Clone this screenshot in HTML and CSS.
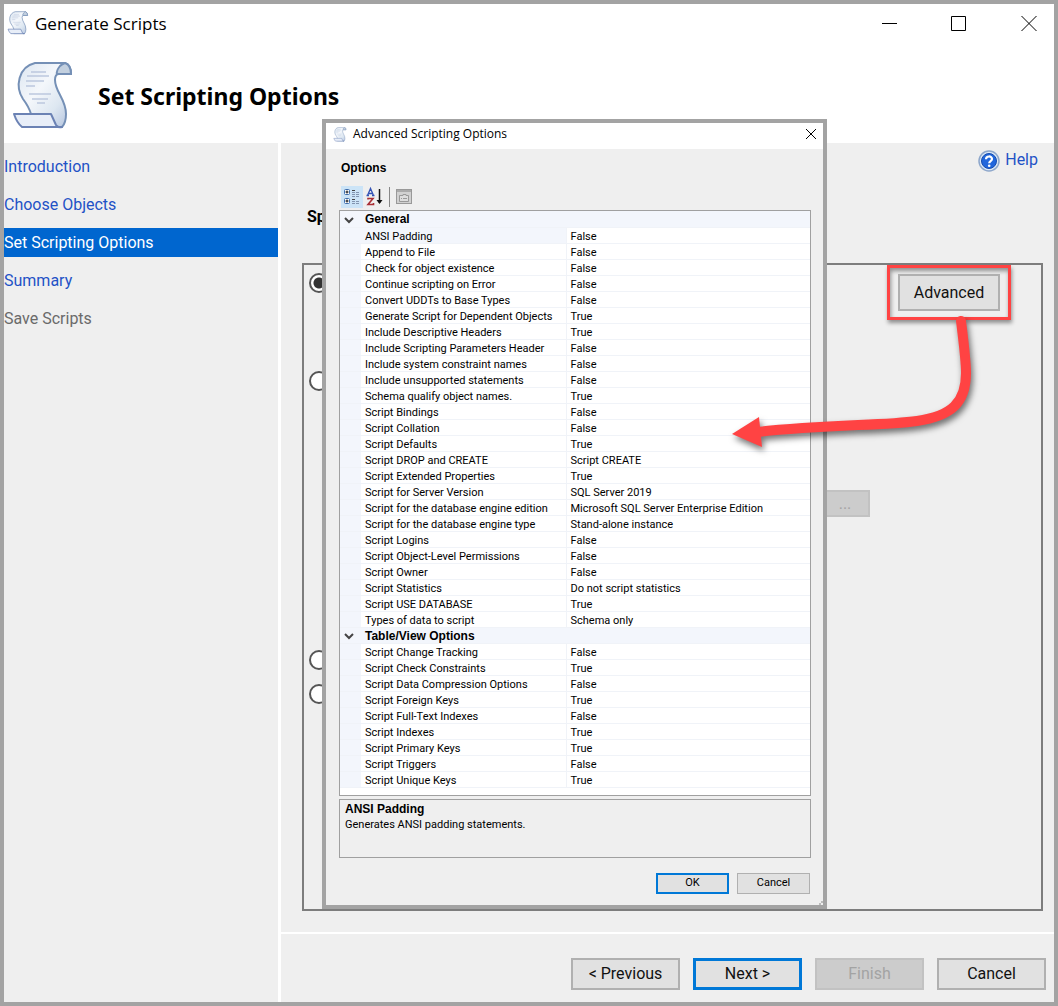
FILE: index.html
```html
<!DOCTYPE html>
<html lang="en">
<head>
<meta charset="utf-8">
<title>Generate Scripts</title>
<link rel="stylesheet" href="styles.css">
</head>
<body>
<svg class="defs" aria-hidden="true">
  <defs>
    <linearGradient id="paper" x1="0" y1="0" x2="1" y2="1">
      <stop offset="0" stop-color="#dce6f1"/><stop offset=".4" stop-color="#f4f7fb"/><stop offset=".7" stop-color="#dde7f1"/><stop offset="1" stop-color="#b0c0dc"/>
    </linearGradient>
    <symbol id="scroll" viewBox="0 0 62 70">
      <path d="M23 2 H53 Q59 4 59 13 H47 Q43 13 43 19 C43 31 54 38 54 53 Q54 62 50 66 H19 L19 53 Q17 46 11 38 C3 26 6 6 23 2Z" fill="url(#paper)" stroke="#7590b6" stroke-width="2"/>
      <path d="M53 2 Q59 4 59 13 H45 Q44 10 48 5 Q50 3 53 2Z" fill="#c3d0df" stroke="#7590b6" stroke-width="2"/>
      <path d="M2 53 H39 L44 64 Q46 67 50 66 H10 Q5 62 2 53Z" fill="#e8eef8" stroke="#6b82b4" stroke-width="2" stroke-linejoin="round"/>
      <path d="M19 11H34M15 15H37M14 20H32M14 25H23M17 33H39M20 38H36M25 42H33" stroke="#bcc8de" stroke-width="1.5"/>
    </symbol>
  </defs>
</svg>
<div class="window">
  <header class="titlebar">
    <svg class="title-icon"><use href="#scroll"/></svg>
    <span class="title">Generate Scripts</span>
    <div class="window-controls">
      <button aria-label="Minimize"><svg viewBox="0 0 16 16"><path d="M1 8.500H16"/></svg></button>
      <button aria-label="Maximize"><svg viewBox="0 0 16 16"><path d="M.5 1.500H14.500V15.500H.5Z"/></svg></button>
      <button aria-label="Close"><svg viewBox="0 0 16 16"><path d="M.5 1L15.500 16M15.500 1L.5 16"/></svg></button>
    </div>
  </header>
  <div class="banner">
    <svg class="banner-icon"><use href="#scroll"/></svg>
    <h1>Set Scripting Options</h1>
  </div>
  <div class="body">
    <nav class="steps">
      <a href="#">Introduction</a>
      <a href="#">Choose Objects</a>
      <a href="#" class="current" aria-current="step">Set Scripting Options</a>
      <a href="#">Summary</a>
      <span>Save Scripts</span>
    </nav>
    <main class="page">
      <div class="help-row">
        <a href="#" class="help">
          <svg viewBox="0 0 22 22"><circle cx="11" cy="11" r="10" fill="#dbe8f7" stroke="#8ea7cb" stroke-width="1.500"/><circle cx="11" cy="11" r="7.500" fill="#2166dc" stroke="#164cae"/><path d="M8 9.200C8 5.600 14 5.600 14 9C14 11.200 11.200 11 11.200 13.200" fill="none" stroke="#fff" stroke-width="2.200"/><circle cx="11.200" cy="15.800" r="1.300" fill="#fff"/></svg>
          Help</a>
      </div>
      <h2>Specify</h2>
      <section class="options">
        <div class="option first">
          <input type="radio" name="target" aria-label="Save to file" checked>
          <div class="callout"><button class="btn advanced">Advanced</button></div>
        </div>
        <div class="option second"><input type="radio" name="target" aria-label="Files to generate"></div>
        <div class="browse-row"><button class="btn browse" disabled aria-label="Browse">...</button></div>
        <div class="option"><input type="radio" name="target" aria-label="Save to clipboard"></div>
        <div class="option"><input type="radio" name="target" aria-label="Save to query window"></div>
      </section>
      <footer class="wizard-buttons">
        <button class="btn">&lt; Previous</button>
        <button class="btn default">Next &gt;</button>
        <button class="btn" disabled>Finish</button>
        <button class="btn">Cancel</button>
      </footer>
    </main>
  </div>

  <div class="dialog" role="dialog" aria-labelledby="dialog-title">
    <header class="dialog-titlebar">
      <svg class="dialog-icon"><use href="#scroll"/></svg>
      <span class="dialog-title" id="dialog-title">Advanced Scripting Options</span>
      <button aria-label="Close dialog"><svg viewBox="0 0 12 12"><path d="M1 1L11 11M11 1L1 11"/></svg></button>
    </header>
    <div class="dialog-body">
      <h3>Options</h3>
      <div class="toolbar">
        <button class="active" aria-label="Categorized"><svg viewBox="0 0 22 22"><g fill="#fff" stroke="#3f6fae"><rect x="3.500" y="3.500" width="5" height="5" rx="1"/><rect x="3.500" y="12.500" width="5" height="5" rx="1"/></g><path d="M4.500 6H7.500M6 4.500V7.500M4.500 15H7.500M6 13.500V16.500" stroke="#111"/><path d="M11 4.500H14M11 13.500H14" stroke="#444"/><path d="M11 6.500H14M15 6.500H18M11 8.500H14M15 8.500H18M11 10.500H14M15 10.500H18M11 15.500H14M15 15.500H18M11 17.500H14M15 17.500H18" stroke="#8295b0"/></svg></button>
        <button aria-label="Alphabetical"><svg viewBox="0 0 22 22"><path d="M3.500 9.500L6.500 2.500L9.500 9.500M4.500 7.500H8.500M2.500 9.500H5M8 9.500H10.500" fill="none" stroke="#3353b5" stroke-width="1.300"/><path d="M4 13.500V12.500H9L4 18.500H9.500V17" fill="none" stroke="#a82e34" stroke-width="1.600"/><path d="M15.500 3V17" stroke="#111" stroke-width="1.500"/><path d="M12.500 14H18.500L15.500 18Z" fill="#111"/></svg></button>
        <span class="separator"></span>
        <button aria-label="Property pages" disabled><svg viewBox="0 0 22 22"><rect x="3.500" y="3.500" width="15" height="14" fill="#d1d1d1" stroke="#999"/><path d="M4 5H18" stroke="#aaa" stroke-width="2"/><path d="M6.500 9.500H10V8.500H13V9.500H15.500V15.500H6.500Z" fill="#ddd" stroke="#999"/><path d="M8 12.500H9M10 12.500H14" stroke="#999"/></svg></button>
      </div>
      <div class="grid">
        <table>
          <colgroup><col class="col-margin"><col class="col-name"><col></colgroup>
          <tbody>
            <tr class="group"><td><svg viewBox="0 0 10 10"><path d="M1 3L5 7L9 3"/></svg></td><th colspan="2" scope="rowgroup">General</th></tr>
            <tr class="selected"><td></td><th scope="row">ANSI Padding</th><td>False</td></tr>
            <tr><td></td><th scope="row">Append to File</th><td>False</td></tr>
            <tr><td></td><th scope="row">Check for object existence</th><td>False</td></tr>
            <tr><td></td><th scope="row">Continue scripting on Error</th><td>False</td></tr>
            <tr><td></td><th scope="row">Convert UDDTs to Base Types</th><td>False</td></tr>
            <tr><td></td><th scope="row">Generate Script for Dependent Objects</th><td>True</td></tr>
            <tr><td></td><th scope="row">Include Descriptive Headers</th><td>True</td></tr>
            <tr><td></td><th scope="row">Include Scripting Parameters Header</th><td>False</td></tr>
            <tr><td></td><th scope="row">Include system constraint names</th><td>False</td></tr>
            <tr><td></td><th scope="row">Include unsupported statements</th><td>False</td></tr>
            <tr><td></td><th scope="row">Schema qualify object names.</th><td>True</td></tr>
            <tr><td></td><th scope="row">Script Bindings</th><td>False</td></tr>
            <tr><td></td><th scope="row">Script Collation</th><td>False</td></tr>
            <tr><td></td><th scope="row">Script Defaults</th><td>True</td></tr>
            <tr><td></td><th scope="row">Script DROP and CREATE</th><td>Script CREATE</td></tr>
            <tr><td></td><th scope="row">Script Extended Properties</th><td>True</td></tr>
            <tr><td></td><th scope="row">Script for Server Version</th><td>SQL Server 2019</td></tr>
            <tr><td></td><th scope="row">Script for the database engine edition</th><td>Microsoft SQL Server Enterprise Edition</td></tr>
            <tr><td></td><th scope="row">Script for the database engine type</th><td>Stand-alone instance</td></tr>
            <tr><td></td><th scope="row">Script Logins</th><td>False</td></tr>
            <tr><td></td><th scope="row">Script Object-Level Permissions</th><td>False</td></tr>
            <tr><td></td><th scope="row">Script Owner</th><td>False</td></tr>
            <tr><td></td><th scope="row">Script Statistics</th><td>Do not script statistics</td></tr>
            <tr><td></td><th scope="row">Script USE DATABASE</th><td>True</td></tr>
            <tr><td></td><th scope="row">Types of data to script</th><td>Schema only</td></tr>
          </tbody>
          <tbody>
            <tr class="group"><td><svg viewBox="0 0 10 10"><path d="M1 3L5 7L9 3"/></svg></td><th colspan="2" scope="rowgroup">Table/View Options</th></tr>
            <tr><td></td><th scope="row">Script Change Tracking</th><td>False</td></tr>
            <tr><td></td><th scope="row">Script Check Constraints</th><td>True</td></tr>
            <tr><td></td><th scope="row">Script Data Compression Options</th><td>False</td></tr>
            <tr><td></td><th scope="row">Script Foreign Keys</th><td>True</td></tr>
            <tr><td></td><th scope="row">Script Full-Text Indexes</th><td>False</td></tr>
            <tr><td></td><th scope="row">Script Indexes</th><td>True</td></tr>
            <tr><td></td><th scope="row">Script Primary Keys</th><td>True</td></tr>
            <tr><td></td><th scope="row">Script Triggers</th><td>False</td></tr>
            <tr><td></td><th scope="row">Script Unique Keys</th><td>True</td></tr>
          </tbody>
        </table>
      </div>
      <div class="description">
        <h4>ANSI Padding</h4>
        <p>Generates ANSI padding statements.</p>
      </div>
      <div class="dialog-buttons">
        <button class="btn small default">OK</button>
        <button class="btn small">Cancel</button>
      </div>
    </div>
    <svg class="grip" viewBox="0 0 4 4"><path d="M2 0H4V2H2ZM0 2H2V4H0Z" fill="#bbb"/></svg>
  </div>

  <svg class="arrow" viewBox="720 300 270 160" aria-hidden="true">
    <path d="M961 321C964 345 966 360 966 373C966 403 951 416 917 421C882 426 830 424 758 432" fill="none" stroke="#ff4343" stroke-width="10" stroke-linecap="round"/>
    <path d="M732 434L759 417L762 447Z" fill="#ff4343"/>
  </svg>
</div>
</body>
</html>
```
FILE: styles.css
```css
* { box-sizing: border-box; }

body {
  margin: 0;
  font: 16px/20px Roboto, "Liberation Sans", Arial, sans-serif;
  color: #111;
}

h1, h2, h3, h4, p { margin: 0; }
button { font: inherit; color: inherit; padding: 0; }
svg { display: block; }
a { text-decoration: none; }
.defs { position: absolute; width: 0; height: 0; }

.window {
  position: relative;
  display: flex;
  flex-direction: column;
  min-height: 100vh;
  border: 4px solid #a3a3a3;
  background: #fff;
}

.titlebar {
  display: flex;
  align-items: center;
  height: 40px;
  padding: 0 17px 2px 3px;
}
.title-icon { width: 22px; height: 24px; }
.title {
  margin-left: 6px;
  padding-top: 2px;
  font: 17px/24px "Open Sans", "Noto Sans", sans-serif;
  color: #000;
}
.window-controls { display: flex; gap: 54px; margin-left: auto; }
.window-controls button,
.dialog-titlebar button { border: 0; background: none; }
.window-controls svg { width: 16px; height: 16px; }
.window-controls path,
.dialog-titlebar button path { fill: none; stroke: #000; }

.banner {
  display: flex;
  align-items: center;
  gap: 24px;
  height: 99px;
  padding: 4px 8px 0;
}
.banner-icon { width: 62px; height: 70px; }
h1 { font: bold 23px/28px "Noto Sans", "Open Sans", sans-serif; color: #000; }

.body { display: flex; flex: 1; }

.steps {
  display: flex;
  flex-direction: column;
  gap: 9px;
  width: 274px;
  padding-top: 9px;
  background: #efefef;
}
.steps a, .steps span { line-height: 29px; }
.steps a { color: #1f52c6; }
.steps span { color: #6a6a6a; }
.steps .current { background: #0066cf; color: #fff; }

.page {
  display: flex;
  flex: 1;
  flex-direction: column;
  margin-left: 3px;
  background: #efefef;
}
.help-row { display: flex; justify-content: flex-end; padding: 7px 16px 0; }
.help { display: flex; gap: 5px; color: #1f52c6; }
.help svg { width: 22px; height: 22px; }
h2 { margin: 34px 0 0 26px; font-size: 16px; line-height: 22px; color: #000; }

.options {
  flex: 1;
  margin: 35px 11px 0 21px;
  padding-left: 5px;
  border: 2px solid #7d7d7d;
}
.option { display: flex; justify-content: space-between; align-items: flex-start; height: 34px; }
.option.first { height: 106px; padding-right: 30px; }
.option.first input { margin-top: 8px; }
.option.second { height: 119px; }
.option input {
  appearance: none;
  width: 20px;
  height: 20px;
  margin: 0;
  border: 2px solid #555;
  border-radius: 50%;
  background: #fff;
}
.option input:checked { background: radial-gradient(circle, #333 5px, #fff 6px); }
.callout {
  padding: 6px 8px;
  border: 3px solid #ff4343;
  box-shadow: 1px 3px 4px #0006, inset 1px 3px 4px #0006;
}
.browse-row { height: 160px; padding-left: 478px; }

.btn {
  width: 109px;
  height: 32px;
  border: 2px solid #b0b0b0;
  border-radius: 0;
  background: #e1e1e1;
}
.btn.default { border: 3px solid #0078d7; }
.btn:disabled { border-color: #c2c2c2; background: #ccc; color: #a3a3a3; }
.btn.advanced { display: block; width: 102px; height: 37px; }
.btn.browse { width: 83px; height: 27px; padding-left: 33px; }

.wizard-buttons {
  display: flex;
  justify-content: flex-end;
  gap: 13px;
  margin-top: 21px;
  padding: 24px 8px 12px;
  border-top: 2px solid #fff;
}

.dialog {
  position: absolute;
  top: 115px;
  left: 318px;
  width: 505px;
  border: 4px solid #a3a3a3;
  background: #efefef;
  font-size: 11px;
  line-height: 16px;
  color: #000;
}
.dialog-titlebar {
  display: flex;
  align-items: center;
  height: 26px;
  padding: 0 6px 4px 7px;
  background: #fff;
}
.dialog-icon { width: 14px; height: 15px; }
.dialog-title { margin-left: 6px; font: 12px/16px "Open Sans", "Noto Sans", sans-serif; }
.dialog-titlebar button { margin-left: auto; }
.dialog-titlebar button svg { width: 12px; height: 12px; }
.dialog-body { padding: 11px 12px 11px 13px; }
h3, h4, .grid .group th { font: bold 12px/16px "Liberation Sans", Arial, sans-serif; }
h3 { padding-left: 2px; }

.toolbar { display: flex; gap: 1px; padding: 10px 0 2px 2px; }
.toolbar button { width: 22px; height: 22px; border: 0; background: none; }
.toolbar .active { background: #cce4f7; }
.toolbar svg { width: 22px; height: 22px; fill: none; }
.separator { width: 1px; margin: 1px 2px; background: #888; }

.grid { padding-bottom: 7px; border: 1px solid #a0a0a0; background: #fff; }
.grid table { width: 100%; border-collapse: collapse; table-layout: fixed; }
.grid td, .grid th {
  height: 16px;
  padding: 2px 0 0 4px;
  border-bottom: 1px solid #f0f3f8;
  font-weight: normal;
  line-height: 13px;
  text-align: left;
  white-space: nowrap;
}
.grid th + td { padding-left: 4px; border-left: 1px solid #f0f3f8; }
.col-margin { width: 21px; }
.col-name { width: 205px; }
.grid td:first-child { background: #f3f6fc; }
.grid .group th { background: #f3f6fc; line-height: 13px; }
.grid .selected th { background: #f3f6fc; }
.grid svg { width: 10px; height: 10px; fill: none; stroke: #444; stroke-width: 2; }

.description { min-height: 59px; margin-top: 3px; padding: 2px 5px; border: 1px solid #a0a0a0; }
.description h4 { line-height: 15px; }
.description p { line-height: 16px; }

.dialog-buttons { display: flex; justify-content: flex-end; gap: 8px; padding: 15px 1px 0; }
.btn.small { width: 73px; height: 21px; border-width: 1px; }
.btn.small.default { border-width: 2px; }
.grip { position: absolute; right: 0; bottom: 0; width: 4px; height: 4px; }

.arrow {
  position: absolute;
  top: 296px;
  left: 716px;
  width: 270px;
  height: 160px;
  filter: drop-shadow(2px 4px 3px #0008);
}
```
